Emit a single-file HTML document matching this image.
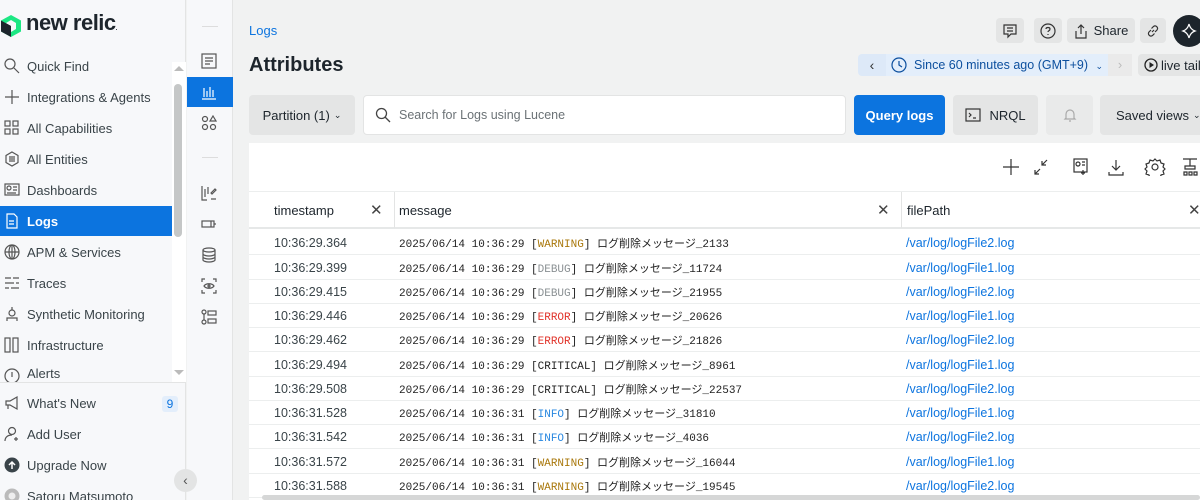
<!DOCTYPE html>
<html><head><meta charset="utf-8"><style>
*{box-sizing:border-box;margin:0;padding:0}
html,body{width:1200px;height:500px;overflow:hidden}
body{background:#f1f2f2;font-family:"Liberation Sans","Noto Sans CJK JP",sans-serif;position:relative;color:#1d252c}
.abs{position:absolute}
#side{left:0;top:0;width:186px;height:500px;background:#f7f8fa;border-right:1px solid #e3e4e4}
.nav{position:absolute;left:0;width:172px;height:30px;font-size:13px;color:#3a4449;display:flex;align-items:center;padding-left:27px}
.nav svg{position:absolute;left:4px;top:7px}
.nav.act{background:#0c74df;color:#fff;font-weight:bold}
#icons{left:187px;top:0;width:46px;height:500px;background:#f7f8fa;border-right:1px solid #e3e4e4}
.ic{position:absolute;left:14px}
.btn{position:absolute;border-radius:4px;background:#e4e5e5;font-size:13px;display:flex;align-items:center;justify-content:center;color:#1d252c}
#panel{left:249px;top:143px;width:951px;height:357px;background:#fff}
.row{position:absolute;left:249px;width:951px;height:24px;border-bottom:1px solid #eceeee;font-size:12.5px}
.row span{position:absolute;top:5px}
.ts{left:25px;color:#3a4449}
.msg{left:150px;font-family:"Liberation Mono","DejaVu Sans Mono","Noto Sans CJK JP",monospace;font-size:11px;color:#222;top:4px!important}
.fp{left:657px;color:#0c74df}
.msg b{font-weight:normal}
.W{color:#a9780c}.D{color:#8a9093}.E{color:#e0332a}.I{color:#2a88e0}
</style></head><body>
<div id="side" class="abs">
 <svg class="abs" style="left:0;top:14px" width="22" height="24" viewBox="0 0 22 24"><path d="M11 1 L21 6.5 V17.5 L11 23 L1 17.5 V6.5Z" fill="#1ce783"/><path d="M11 6 L16 9 V15 L11 18 L6 15 V9Z" fill="#f7f8fa"/><path d="M1 6.5 L11 12 V23 L1 17.5Z" fill="#1d252c"/><path d="M6 9.2 L11 12 V18 L6 15Z" fill="#1d252c"/></svg>
 <div class="abs" style="left:26px;top:10px;font-size:22px;font-weight:bold;letter-spacing:-0.5px;color:#1d252c">new relic<span style="font-size:6px">.</span></div>
 <div class="nav" style="top:51px"><svg width="16" height="16" fill="none" stroke="#555" stroke-width="1.2"><circle cx="6" cy="6" r="5"/><path d="M10 10l5 5"/></svg>Quick Find</div>
 <div class="nav" style="top:82px"><svg width="16" height="16" stroke="#555" stroke-width="1.2"><path d="M8 1v14M1 8h14"/></svg>Integrations &amp; Agents</div>
 <div class="nav" style="top:113px"><svg width="16" height="16" fill="none" stroke="#555" stroke-width="1.2"><rect x="1" y="1" width="5" height="5"/><rect x="9" y="1" width="5" height="5"/><rect x="1" y="9" width="5" height="5"/><rect x="9" y="9" width="5" height="5"/></svg>All Capabilities</div>
 <div class="nav" style="top:144px"><svg width="16" height="16" fill="none" stroke="#555" stroke-width="1.2"><path d="M8 1l6 3.5v7L8 15l-6-3.5v-7z"/><path d="M5 6h6M5 8h6M5 10h6"/></svg>All Entities</div>
 <div class="nav" style="top:175px"><svg width="16" height="16" fill="none" stroke="#555" stroke-width="1.2"><rect x="1" y="2" width="14" height="11"/><circle cx="5" cy="6" r="2"/><path d="M9 5h4M9 8h4M3 11h9"/></svg>Dashboards</div>
 <div class="nav act" style="top:206px"><svg width="16" height="16" fill="none" stroke="#fff" stroke-width="1.2"><path d="M3 1h7l3 3v11H3z"/><path d="M5 8h5M5 11h5"/></svg>Logs</div>
 <div class="nav" style="top:237px"><svg width="16" height="16" fill="none" stroke="#555" stroke-width="1.2"><circle cx="8" cy="8" r="7"/><path d="M1 8h14M8 1v14"/><ellipse cx="8" cy="8" rx="3" ry="7"/></svg>APM &amp; Services</div>
 <div class="nav" style="top:268px"><svg width="16" height="16" stroke="#555" stroke-width="1.2"><path d="M1 3h6M9 3h6M1 8h9M12 8h3M1 13h4M7 13h8"/></svg>Traces</div>
 <div class="nav" style="top:299px"><svg width="16" height="16" fill="none" stroke="#555" stroke-width="1.2"><circle cx="8" cy="7" r="3"/><path d="M8 1v3M3 15v-3h10v3"/></svg>Synthetic Monitoring</div>
 <div class="nav" style="top:330px"><svg width="16" height="16" fill="none" stroke="#555" stroke-width="1.2"><rect x="1" y="1" width="5" height="14"/><rect x="9" y="1" width="5" height="14"/></svg>Infrastructure</div>
 <div class="nav" style="top:366px;height:16px;overflow:hidden;align-items:flex-start"><svg width="16" height="16" style="top:2px" fill="none" stroke="#555" stroke-width="1.2"><circle cx="8" cy="8" r="7"/><path d="M8 4v5"/></svg>Alerts</div>
 <div class="abs" style="left:172px;top:62px;width:14px;height:320px;background:#fff"></div>
 <div class="abs" style="left:174px;top:84px;width:8px;height:153px;background:#c5c7c7;border-radius:4px"></div>
 <div class="abs" style="left:174px;top:66px;width:0;height:0;border:5px solid transparent;border-bottom-color:#bbb;border-top:0"></div>
 <div class="abs" style="left:174px;top:370px;width:0;height:0;border:5px solid transparent;border-top-color:#bbb;border-bottom:0"></div>
 <div class="abs" style="left:0;top:382px;width:186px;height:1px;background:#e3e4e4"></div>
 <div class="nav" style="top:388px"><svg width="16" height="16" fill="none" stroke="#555" stroke-width="1.2"><path d="M2 6h4l7-4v12l-7-4H2z"/><path d="M4 10v4"/></svg>What's New</div>
 <div class="abs" style="left:162px;top:396px;width:16px;height:16px;background:#e3eefb;color:#0c74df;font-size:12px;border-radius:3px;text-align:center;line-height:16px">9</div>
 <div class="nav" style="top:419px"><svg width="16" height="16" fill="none" stroke="#555" stroke-width="1.2"><circle cx="8" cy="5" r="3.5"/><path d="M1 15c0-4 3-6 7-6M12 11v4M10 13h4"/></svg>Add User</div>
 <div class="nav" style="top:450px"><svg width="16" height="16"><circle cx="8" cy="8" r="7.5" fill="#3a4449"/><path d="M8 12V5M5 8l3-3 3 3" stroke="#fff" stroke-width="1.5" fill="none"/></svg>Upgrade Now</div>
 <div class="nav" style="top:481px"><svg width="16" height="16"><circle cx="8" cy="8" r="7.5" fill="#bbb"/><circle cx="8" cy="8" r="3.5" fill="#eee"/></svg>Satoru Matsumoto</div>
</div>
<div id="icons" class="abs">
 <div class="abs" style="left:15px;top:26px;width:16px;height:1px;background:#ddd"></div>
 <svg class="ic" style="top:53px" width="16" height="16" fill="none" stroke="#555" stroke-width="1.2"><rect x="1" y="1" width="14" height="14"/><path d="M4 5h8M4 8h8M4 11h5"/></svg>
 <div class="abs" style="left:0;top:77px;width:46px;height:30px;background:#0c74df"></div>
 <svg class="ic" style="top:84px" width="16" height="16" stroke="#fff" stroke-width="1.2"><path d="M1 15h14M3 4v9M6 7v6M9 3v10M12 6v7"/></svg>
 <svg class="ic" style="top:115px" width="16" height="16" fill="none" stroke="#555" stroke-width="1.2"><circle cx="4" cy="4" r="2.5"/><path d="M12 1l3 5h-6z"/><circle cx="4" cy="12" r="2.5"/><circle cx="12" cy="12" r="2.5"/></svg>
 <div class="abs" style="left:15px;top:157px;width:16px;height:1px;background:#ddd"></div>
 <svg class="ic" style="top:185px" width="16" height="16" fill="none" stroke="#555" stroke-width="1.2"><path d="M1 1v14h5M4 4v8M7 2v7M10 8l4-4 1 1-4 4zM10 14h5"/></svg>
 <svg class="ic" style="top:216px" width="16" height="16" fill="none" stroke="#555" stroke-width="1.2"><rect x="1" y="5" width="12" height="6"/><path d="M13 8h2M10 5v6"/></svg>
 <svg class="ic" style="top:247px" width="16" height="16" fill="none" stroke="#555" stroke-width="1.2"><ellipse cx="8" cy="3" rx="6" ry="2"/><path d="M2 3v10c0 1 3 2 6 2s6-1 6-2V3M2 7c0 1 3 2 6 2s6-1 6-2M2 10c0 1 3 2 6 2s6-1 6-2"/></svg>
 <svg class="ic" style="top:278px" width="16" height="16" fill="none" stroke="#555" stroke-width="1.2"><path d="M1 4V1h3M12 1h3v3M1 12v3h3M15 12v3h-3"/><path d="M3 8c2-3 8-3 10 0-2 3-8 3-10 0z"/><circle cx="8" cy="8" r="1"/></svg>
 <svg class="ic" style="top:309px" width="16" height="16" fill="none" stroke="#555" stroke-width="1.2"><circle cx="3" cy="3" r="2"/><circle cx="3" cy="13" r="2"/><path d="M3 5v6"/><rect x="7" y="2" width="8" height="4"/><rect x="7" y="10" width="8" height="4"/></svg>
</div>
<div class="abs" style="left:174px;top:469px;width:23px;height:23px;border-radius:50%;background:#e3e4e4;text-align:center;line-height:22px;color:#555;font-size:14px;z-index:5">‹</div>
<div class="abs" style="left:249px;top:23px;font-size:13px;color:#0c74df">Logs</div>
<div class="abs" style="left:249px;top:54px;font-size:20px;font-weight:bold">Attributes</div>
<div class="btn" style="left:996px;top:18px;width:28px;height:25px">
<svg width="16" height="16" fill="none" stroke="#333" stroke-width="1.2"><path d="M2 2h12v9H9l-3 3v-3H2z"/><path d="M5 5h6M5 8h6"/></svg></div>
<div class="btn" style="left:1034px;top:18px;width:28px;height:25px"><svg width="16" height="16" fill="none" stroke="#333" stroke-width="1.2"><circle cx="8" cy="8" r="7"/><path d="M6 6c0-2 4-2 4 0s-2 1.5-2 3M8 11v1"/></svg></div>
<div class="btn" style="left:1067px;top:18px;width:68px;height:25px"><svg width="14" height="16" fill="none" stroke="#333" stroke-width="1.2" style="margin-right:6px"><path d="M7 11V2M4 5l3-3 3 3M2 8v7h10V8"/></svg>Share</div>
<div class="btn" style="left:1140px;top:18px;width:26px;height:25px"><svg width="14" height="14" fill="none" stroke="#333" stroke-width="1.2"><path d="M6 8l2-2M5 6l-2 2a2.5 2.5 0 003.5 3.5l2-2M9 8l2-2A2.5 2.5 0 007.5 2.5l-2 2"/></svg></div>
<div class="abs" style="left:1173px;top:15px;width:32px;height:32px;border-radius:50%;background:#1d252c"><svg width="32" height="32" fill="none" stroke="#fff" stroke-width="1.2"><path d="M16 9c1 4 3 6 6 7-3 1-5 3-6 7-1-4-3-6-6-7 3-1 5-3 6-7z"/></svg></div>
<div class="abs" style="left:858px;top:54px;width:28px;height:22px;background:#dde9f8;border-radius:4px 0 0 4px;text-align:center;color:#333;font-size:14px;line-height:22px">‹</div>
<div class="abs" style="left:886px;top:54px;width:222px;height:22px;background:#e3eefb;font-size:12.5px;color:#0c4f9e;line-height:22px;padding-left:28px">Since 60 minutes ago (GMT+9) <span style="font-size:9px;margin-left:4px">⌄</span>
<svg class="abs" style="left:5px;top:3px" width="16" height="16" fill="none" stroke="#0c4f9e" stroke-width="1.2"><circle cx="8" cy="8" r="7"/><path d="M8 4v4l3 2"/></svg></div>
<div class="abs" style="left:1108px;top:54px;width:24px;height:22px;background:#eaeaea;text-align:center;color:#bbb;font-size:13px;line-height:22px">›</div>
<div class="btn" style="left:1138px;top:54px;width:70px;height:22px;justify-content:flex-start;padding-left:6px"><svg width="14" height="14" style="margin-right:3px"><circle cx="7" cy="7" r="6" fill="none" stroke="#222" stroke-width="1.3"/><path d="M5.5 4v6l4.5-3z" fill="#222"/></svg>live tail</div>
<div class="btn" style="left:249px;top:95px;width:106px;height:40px">Partition (1) <span style="font-size:9px;margin-left:4px">⌄</span></div>
<div class="abs" style="left:363px;top:95px;width:483px;height:40px;background:#fff;border:1px solid #e3e4e4;border-radius:4px;font-size:12.5px;color:#6b7276;line-height:38px;padding-left:35px">Search for Logs using Lucene
<svg class="abs" style="left:11px;top:11px" width="16" height="16" fill="none" stroke="#444" stroke-width="1.3"><circle cx="6.5" cy="6.5" r="5"/><path d="M10 10l5 5"/></svg></div>
<div class="btn" style="left:854px;top:95px;width:91px;height:40px;background:#0c74df;color:#fff;font-weight:bold">Query logs</div>
<div class="btn" style="left:953px;top:95px;width:85px;height:40px"><svg width="16" height="16" fill="none" stroke="#333" stroke-width="1.2" style="margin-right:8px"><rect x="1" y="2" width="14" height="12"/><path d="M4 6l2 2-2 2M8 11h3"/></svg>NRQL</div>
<div class="btn" style="left:1046px;top:95px;width:47px;height:40px;background:#e9eaea"><svg width="16" height="16" fill="none" stroke="#aaa" stroke-width="1.2"><path d="M4 11V7a4 4 0 018 0v4l1 1H3zM7 14h2"/></svg></div>
<div class="btn" style="left:1100px;top:95px;width:110px;height:40px;justify-content:flex-start;padding-left:16px">Saved views <span style="font-size:9px;margin-left:4px">⌄</span></div>
<div id="panel" class="abs"></div>
<svg class="abs" style="left:1003px;top:158px" width="200" height="18" fill="none" stroke="#333" stroke-width="1.2">
<path d="M8 1v16M0 9h16"/>
<path d="M44 2l-5 5M39 3v4h4M37 11l-5 5M32 12v4h4"/>
<rect x="71" y="1" width="13" height="13"/><circle cx="75" cy="6" r="2"/><path d="M79 4h3M79 7h3M80 12v5M78 15h4"/>
<path d="M113 2v10M109 8l4 4 4-4M106 14v3h14v-3"/>
<circle cx="152" cy="9" r="3"/><path d="M152 1l2 2 3-1 1 3 3 1-1 3 2 2-2 2 1 3-3 1-1 3-3-1-2 2-2-2-3 1-1-3-3-1 1-3-2-2 2-2-1-3 3-1 1-3 3 1z"/>
<path d="M180 1h14M187 1v7M182 8h10v3h-10zM181 14h3v3h-3zM186 14h3v3h-3zM191 14h3v3h-3z"/>
</svg>
<div class="abs" style="left:249px;top:191px;width:951px;height:38px;border-top:1px solid #eceeee;border-bottom:2px solid #e6e8e8;font-size:13px">
<span class="abs" style="left:25px;top:11px">timestamp</span><span class="abs" style="left:121px;top:9px;font-size:15px;color:#444">✕</span>
<div class="abs" style="left:145px;top:0;width:1px;height:36px;background:#e3e4e4"></div>
<span class="abs" style="left:150px;top:11px">message</span><span class="abs" style="left:628px;top:9px;font-size:15px;color:#444">✕</span>
<div class="abs" style="left:652px;top:0;width:1px;height:36px;background:#e3e4e4"></div>
<span class="abs" style="left:658px;top:11px">filePath</span><span class="abs" style="left:939px;top:9px;font-size:15px;color:#444">✕</span>
</div>
<div class="row" style="top:231px"><span class="ts">10:36:29.364</span><span class="msg">2025/06/14 10:36:29 [<b class="W">WARNING</b>] ログ削除メッセージ_2133</span><span class="fp">/var/log/logFile2.log</span></div>
<div class="row" style="top:256px"><span class="ts">10:36:29.399</span><span class="msg">2025/06/14 10:36:29 [<b class="D">DEBUG</b>] ログ削除メッセージ_11724</span><span class="fp">/var/log/logFile1.log</span></div>
<div class="row" style="top:280px"><span class="ts">10:36:29.415</span><span class="msg">2025/06/14 10:36:29 [<b class="D">DEBUG</b>] ログ削除メッセージ_21955</span><span class="fp">/var/log/logFile2.log</span></div>
<div class="row" style="top:304px"><span class="ts">10:36:29.446</span><span class="msg">2025/06/14 10:36:29 [<b class="E">ERROR</b>] ログ削除メッセージ_20626</span><span class="fp">/var/log/logFile1.log</span></div>
<div class="row" style="top:328px"><span class="ts">10:36:29.462</span><span class="msg">2025/06/14 10:36:29 [<b class="E">ERROR</b>] ログ削除メッセージ_21826</span><span class="fp">/var/log/logFile2.log</span></div>
<div class="row" style="top:353px"><span class="ts">10:36:29.494</span><span class="msg">2025/06/14 10:36:29 [CRITICAL] ログ削除メッセージ_8961</span><span class="fp">/var/log/logFile1.log</span></div>
<div class="row" style="top:377px"><span class="ts">10:36:29.508</span><span class="msg">2025/06/14 10:36:29 [CRITICAL] ログ削除メッセージ_22537</span><span class="fp">/var/log/logFile2.log</span></div>
<div class="row" style="top:401px"><span class="ts">10:36:31.528</span><span class="msg">2025/06/14 10:36:31 [<b class="I">INFO</b>] ログ削除メッセージ_31810</span><span class="fp">/var/log/logFile1.log</span></div>
<div class="row" style="top:425px"><span class="ts">10:36:31.542</span><span class="msg">2025/06/14 10:36:31 [<b class="I">INFO</b>] ログ削除メッセージ_4036</span><span class="fp">/var/log/logFile2.log</span></div>
<div class="row" style="top:450px"><span class="ts">10:36:31.572</span><span class="msg">2025/06/14 10:36:31 [<b class="W">WARNING</b>] ログ削除メッセージ_16044</span><span class="fp">/var/log/logFile1.log</span></div>
<div class="row" style="top:474px"><span class="ts">10:36:31.588</span><span class="msg">2025/06/14 10:36:31 [<b class="W">WARNING</b>] ログ削除メッセージ_19545</span><span class="fp">/var/log/logFile2.log</span></div>
<div class="abs" style="left:262px;top:495px;width:938px;height:5px;background:#d6d7d7;border-radius:3px"></div>
</body></html>
